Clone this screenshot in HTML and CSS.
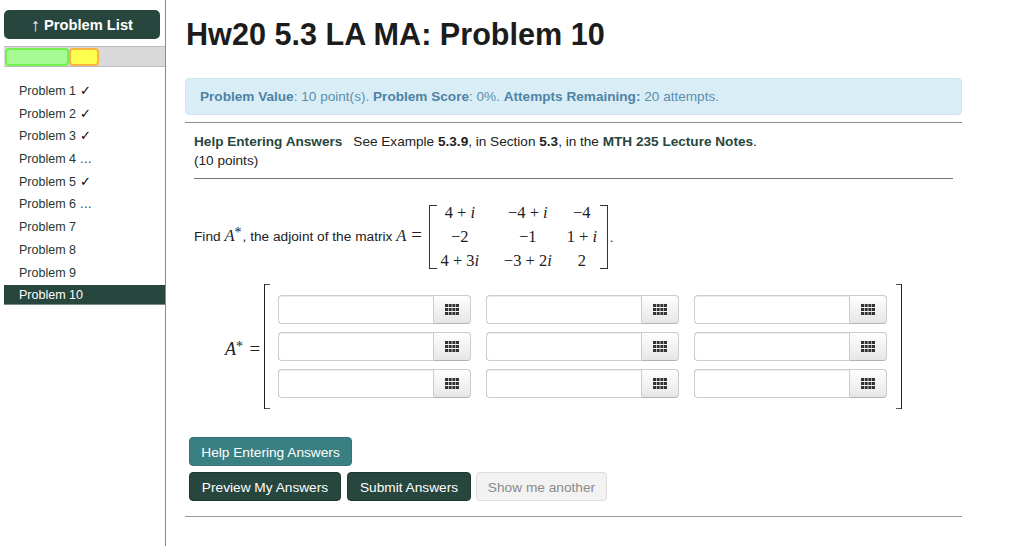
FILE: index.html
```html
<!DOCTYPE html>
<html lang="en">
<head>
<meta charset="utf-8">
<title>Hw20 5.3 LA MA: Problem 10</title>
<link rel="stylesheet" href="styles.css">
</head>
<body>
<svg class="defs" width="0" height="0" aria-hidden="true">
  <symbol id="grid" viewBox="0 0 14 11">
    <path d="M0 0h3v3H0zM3.7 0h3v3h-3zM7.4 0h3v3h-3zM11 0h3v3h-3zM0 4h3v3H0zM3.7 4h3v3h-3zM7.4 4h3v3h-3zM11 4h3v3h-3zM0 8h3v3H0zM3.7 8h3v3h-3zM7.4 8h3v3h-3zM11 8h3v3h-3z"/>
  </symbol>
</svg>
<div class="page">
  <aside class="sidebar">
    <a class="list-btn"><span class="arrow">↑</span> Problem List</a>
    <div class="progress"><span class="seg seg-green"></span><span class="seg seg-yellow"></span></div>
    <ul class="problems">
      <li>Problem 1 <span class="mark">✓</span></li>
      <li>Problem 2 <span class="mark">✓</span></li>
      <li>Problem 3 <span class="mark">✓</span></li>
      <li>Problem 4 …</li>
      <li>Problem 5 <span class="mark">✓</span></li>
      <li>Problem 6 …</li>
      <li>Problem 7</li>
      <li>Problem 8</li>
      <li>Problem 9</li>
      <li class="active">Problem 10</li>
    </ul>
  </aside>
  <main class="main">
    <h1 class="title">Hw20 5.3 LA MA: Problem 10</h1>
    <div class="alert"><b>Problem Value</b>: 10 point(s). <b>Problem Score</b>: 0%. <b>Attempts Remaining:</b> 20 attempts.</div>
    <section class="problem">
      <p class="help"><b class="help-link">Help Entering Answers</b><span class="see">See Example <b>5.3.9</b>, in Section <b>5.3</b>, in the <b class="help-link">MTH 235 Lecture Notes</b>.</span><br>(10 points)</p>
    </section>
    <div class="statement">
      <span class="lead">Find <i class="m">A</i><span class="m sup">*</span>, the adjoint of the matrix <i class="m">A</i> <span class="m eq">=</span></span>
      <div class="matrix">
        <span class="m">4 + <i>i</i></span><span class="m">−4 + <i>i</i></span><span class="m">−4</span>
        <span class="m">−2</span><span class="m">−1</span><span class="m">1 + <i>i</i></span>
        <span class="m">4 + 3<i>i</i></span><span class="m">−3 + 2<i>i</i></span><span class="m">2</span>
      </div>
      <span class="dot">.</span>
    </div>
    <div class="answer">
      <span class="m answer-label"><i>A</i><span class="sup">*</span> <span class="eq">=</span></span>
      <div class="answer-grid">
        <div class="field"><div class="box"></div><div class="pick"><svg width="14" height="11"><use href="#grid"/></svg></div></div>
        <div class="field"><div class="box"></div><div class="pick"><svg width="14" height="11"><use href="#grid"/></svg></div></div>
        <div class="field"><div class="box"></div><div class="pick"><svg width="14" height="11"><use href="#grid"/></svg></div></div>
        <div class="field"><div class="box"></div><div class="pick"><svg width="14" height="11"><use href="#grid"/></svg></div></div>
        <div class="field"><div class="box"></div><div class="pick"><svg width="14" height="11"><use href="#grid"/></svg></div></div>
        <div class="field"><div class="box"></div><div class="pick"><svg width="14" height="11"><use href="#grid"/></svg></div></div>
        <div class="field"><div class="box"></div><div class="pick"><svg width="14" height="11"><use href="#grid"/></svg></div></div>
        <div class="field"><div class="box"></div><div class="pick"><svg width="14" height="11"><use href="#grid"/></svg></div></div>
        <div class="field"><div class="box"></div><div class="pick"><svg width="14" height="11"><use href="#grid"/></svg></div></div>
      </div>
    </div>
    <div class="actions">
      <div class="row"><a class="btn btn-teal">Help Entering Answers</a></div>
      <div class="row">
        <a class="btn btn-dark btn-preview">Preview My Answers</a>
        <a class="btn btn-dark btn-submit">Submit Answers</a>
        <a class="btn btn-off">Show me another</a>
      </div>
    </div>
    <hr class="end">
  </main>
</div>
</body>
</html>
```
FILE: styles.css
```css
* { box-sizing: border-box; }
html, body { margin: 0; height: 546px; overflow: hidden; background: #fff; }
body { font-family: "Liberation Sans", Arial, sans-serif; font-size: 13.6px; color: #222; }
.defs { position: absolute; }
.page { display: flex; height: 546px; }

.sidebar { width: 166px; flex: none; padding: 10px 0 0 4px; border-right: 1px solid #8a8a8a; }
.list-btn { display: flex; align-items: center; justify-content: center; gap: 4px; width: 156px; height: 29px; background: #27463d; color: #fff; border-radius: 5px; font-size: 14.7px; font-weight: bold; }
.arrow { font-size: 18px; font-weight: normal; line-height: 1; }
.progress { display: flex; height: 21px; margin-top: 7px; padding: 1px 0 0 1px; background: #d9d9d9; border: 1px solid #bdbdbd; border-width: 1px 0; }
.seg { height: 18px; border-radius: 4px; border: 2px solid; }
.seg-green { width: 64px; background: #a6fb93; border-color: #74f04f; }
.seg-yellow { width: 30px; background: #ffff4d; border-color: #f9b53f; }
.problems { list-style: none; margin: 13px 0 0; padding: 0; }
.problems li { height: 22.7px; line-height: 22.7px; padding-left: 15px; font-size: 12.5px; color: #1f3932; }
.problems li.active { height: 20px; margin-top: 1px; line-height: 20px; background: #27463d; color: #fff; border-bottom: 1px solid #7a8a85; }
.mark { margin-left: 1px; color: #000; }

.main { width: 797px; padding-left: 19px; flex: none; }
.title { margin: 15px 0 0 1px; font-size: 30.6px; line-height: 38px; font-weight: bold; color: #1c1c1c; }
.alert { width: 777px; height: 37px; margin-top: 25px; padding-left: 14px; line-height: 36px; font-size: 13.6px; background: #d9edf7; border: 1px solid #cfe6f1; border-radius: 4px; color: #5b8fae; }
.alert b { color: #4f83a5; }
.problem { width: 777px; margin-top: 7px; padding: 9px 9px 0; height: 57px; border-top: 1px solid #8a8a8a; }
.help { margin: 0; font-size: 13.6px; line-height: 19px; border-bottom: 1px solid #777; height: 47px; color: #222; }
.help-link { color: #27463d; }
.see { margin-left: 11px; }

.m { font-family: "Liberation Serif", "Times New Roman", serif; font-size: 16.5px; }
.sup { font-size: 14px; line-height: 0; vertical-align: 4px; margin-right: 1px; }
.eq { font-size: 19px; line-height: 1; margin-left: 1px; }
.statement { display: flex; align-items: center; margin: 25px 0 0 9px; height: 66px; }
.lead { white-space: nowrap; margin-bottom: 4px; font-size: 13.7px; }
.matrix { position: relative; display: grid; grid-template-columns: 48px 88px 20px; grid-auto-rows: 24px; justify-items: center; align-items: center; width: 179px; margin-left: 7px; padding-left: 6px; height: 64px; align-content: center; border: solid #333; border-width: 0 1.5px; white-space: nowrap; }
.matrix::before, .matrix::after { content: ""; position: absolute; top: 0; bottom: 0; width: 7px; border: solid #333; border-width: 1px 0; }
.matrix::before { left: 0; }
.matrix::after { right: 0; }
.dot { margin-left: 2px; }

.answer { display: flex; align-items: center; margin: 14px 0 0 40px; height: 125px; }
.answer-label { width: 39px; font-size: 18px; white-space: nowrap; padding-top: 5px; }
.answer-grid { position: relative; display: grid; grid-template-columns: repeat(3, 193px); column-gap: 15px; row-gap: 8px; align-content: center; width: 638px; height: 125px; padding-left: 13px; border: solid #222; border-width: 0 1.5px; }
.answer-grid::before, .answer-grid::after { content: ""; position: absolute; top: 0; bottom: 0; width: 5px; border: solid #555; border-width: 1px 0; }
.answer-grid::before { left: 0; }
.answer-grid::after { right: 0; }
.field { display: flex; height: 29px; }
.box { flex: 1; background: #fff; border: 1px solid #ccc; border-right: 0; border-radius: 4px 0 0 4px; box-shadow: inset 0 1px 1px rgba(0,0,0,.075); }
.pick { display: flex; align-items: center; justify-content: center; width: 38px; background: linear-gradient(#fff, #e6e6e6); border: 1px solid #ccc; border-bottom-color: #b3b3b3; border-radius: 0 4px 4px 0; }
.pick svg { fill: #333; }

.actions { display: flex; flex-direction: column; gap: 6px; margin: 28px 0 0 4px; }
.row { display: flex; gap: 6px; }
.btn { display: flex; align-items: center; justify-content: center; height: 29px; padding-top: 1px; border-radius: 4px; font-size: 13.7px; border: 1px solid; }
.btn-teal { width: 163px; background: #3a7f82; border-color: #34747a; color: #fff; }
.btn-dark { background: #27463d; border-color: #1f3932; color: #fff; }
.btn-preview { width: 152px; }
.btn-submit { width: 124px; }
.btn-off { width: 131px; margin-left: -1px; background: #f2f2f2; border-color: #ddd; color: #8a8a8a; }
.end { width: 777px; margin: 15px 0 0; border: 0; border-top: 1px solid #999; }
```
